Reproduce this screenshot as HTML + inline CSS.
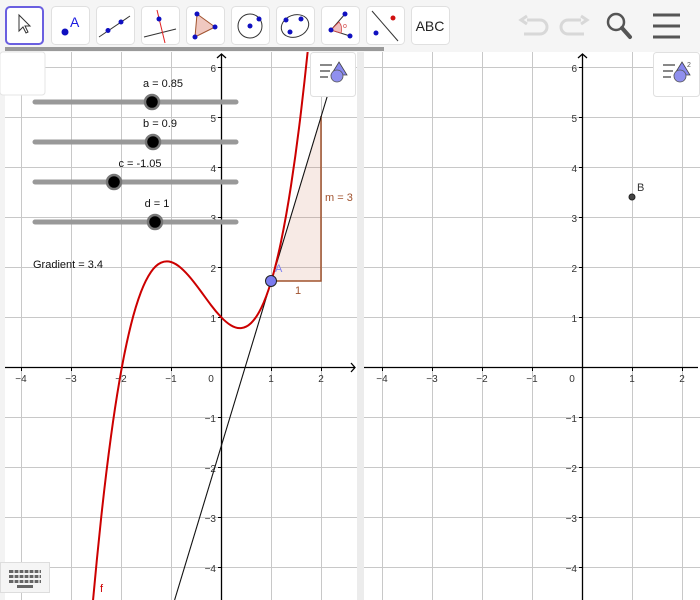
<!DOCTYPE html>
<html><head><meta charset="utf-8"><style>
html,body{margin:0;padding:0;width:700px;height:600px;overflow:hidden;background:#fff;font-family:"Liberation Sans",sans-serif}
svg{position:absolute;left:0;top:0}
</style></head><body>
<svg width="700" height="600" viewBox="0 0 700 600" font-family="Liberation Sans, sans-serif">
<rect x="0" y="0" width="700" height="600" fill="#fff"/>
<rect x="0" y="52" width="5" height="548" fill="#f3f3f3"/>
<rect x="357" y="52" width="7" height="548" fill="#ececec"/>
<g stroke="#c8c8c8" stroke-width="1">
<path d="M21.5 52V600M71.5 52V600M121.5 52V600M171.5 52V600M271.5 52V600M321.5 52V600"/>
<path d="M5 67.5H357M5 117.5H357M5 167.5H357M5 217.5H357M5 267.5H357M5 317.5H357M5 417.5H357M5 467.5H357M5 517.5H357M5 567.5H357"/>
</g>
<g stroke="#c8c8c8" stroke-width="1">
<path d="M382.5 52V600M432.5 52V600M482.5 52V600M532.5 52V600M632.5 52V600M682.5 52V600"/>
<path d="M364 67.5H700M364 117.5H700M364 167.5H700M364 217.5H700M364 267.5H700M364 317.5H700M364 417.5H700M364 467.5H700M364 517.5H700M364 567.5H700"/>
</g>
<g stroke="#000" stroke-width="1.3" fill="none">
<path d="M221.5 54V600M5 367.5H355"/>
<path d="M217 58L221.5 54L226 58M351 363L355 367.5L351 372"/>
<path d="M582.5 54V600M364 367.5H698"/>
<path d="M578 58L582.5 54L587 58"/>
</g>
<g stroke="#000" stroke-width="1">
<path d="M21.5 367V371M71.5 367V371M121.5 367V371M171.5 367V371M271.5 367V371M321.5 367V371"/>
<path d="M218 67.5H221M218 117.5H221M218 167.5H221M218 217.5H221M218 267.5H221M218 317.5H221M218 417.5H221M218 467.5H221M218 517.5H221M218 567.5H221"/>
<path d="M382.5 367V371M432.5 367V371M482.5 367V371M532.5 367V371M632.5 367V371M682.5 367V371"/>
<path d="M579 67.5H582M579 117.5H582M579 167.5H582M579 217.5H582M579 267.5H582M579 317.5H582M579 417.5H582M579 467.5H582M579 517.5H582M579 567.5H582"/>
</g>
<g font-size="10" fill="#333" text-anchor="middle">
<text x="21" y="382">−4</text><text x="71" y="382">−3</text><text x="121" y="382">−2</text><text x="171" y="382">−1</text><text x="211" y="382">0</text><text x="271" y="382">1</text><text x="321" y="382">2</text>
<text x="382" y="382">−4</text><text x="432" y="382">−3</text><text x="482" y="382">−2</text><text x="532" y="382">−1</text><text x="572" y="382">0</text><text x="632" y="382">1</text><text x="682" y="382">2</text>
</g>
<g font-size="10" fill="#333" text-anchor="end">
<text x="216" y="72">6</text><text x="216" y="122">5</text><text x="216" y="172">4</text><text x="216" y="222">3</text><text x="216" y="272">2</text><text x="216" y="322">1</text>
<text x="216" y="422">−1</text><text x="216" y="472">−2</text><text x="216" y="522">−3</text><text x="216" y="572">−4</text>
<text x="577" y="72">6</text><text x="577" y="122">5</text><text x="577" y="172">4</text><text x="577" y="222">3</text><text x="577" y="272">2</text><text x="577" y="322">1</text>
<text x="577" y="422">−1</text><text x="577" y="472">−2</text><text x="577" y="522">−3</text><text x="577" y="572">−4</text>
</g>
<polygon points="271,281 321,281 321,116" fill="#c87050" fill-opacity="0.15"/>
<path d="M271 281H321V116" stroke="#a0522d" stroke-width="1.5" fill="none"/>
<text x="298" y="294" font-size="11" fill="#a0522d" text-anchor="middle">1</text>
<text x="325" y="201" font-size="11" fill="#a0522d">m = 3</text>
<clipPath id="cl"><rect x="5" y="52" width="352" height="548"/></clipPath>
<g clip-path="url(#cl)">
<path d="M174.6 600L340.7 52" stroke="#111" stroke-width="1.1" fill="none"/>
<path fill="none" stroke="#cc0000" stroke-width="2" d="M91 623.3 C94.3 584.9 97.7 550.4 101 519.3 C104.3 488.2 107.7 460.6 111 436.2 C114.3 411.8 117.7 390.5 121 372 C124.3 353.5 127.7 337.8 131 324.6 C134.3 311.4 137.7 300.6 141 291.9 C144.3 283.2 147.7 276.7 151 271.9 C154.3 267.1 157.7 264.2 161 262.7 C164.3 261.2 167.7 261 171 262 C174.3 263 177.7 265.1 181 268 C184.3 270.9 187.7 274.5 191 278.5 C194.3 282.5 197.7 287 201 291.5 C204.3 296 207.7 300.7 211 305.1 C214.3 309.5 217.7 313.5 221 317 C224.3 320.5 227.7 323.4 231 325.4 C234.3 327.4 237.7 328.4 241 328.1 C244.3 327.8 247.7 326.3 251 323.1 C254.3 319.9 257.7 315.1 261 308.4 C264.3 301.7 267.7 293 271 282 C274.3 271 277.7 257.7 281 241.8 C284.3 225.9 287.7 207.3 291 185.7 C294.3 164.1 297.7 139.6 301 111.7 C304.3 83.8 307.7 52.8 311 17.9"/>
</g>
<text x="100" y="592" font-size="11" fill="#cc0000">f</text>
<circle cx="271" cy="281" r="5.5" fill="#7b7bef" stroke="#222" stroke-width="1"/>
<text x="275" y="272" font-size="11" fill="#8080f0">A</text>
<circle cx="632" cy="197" r="3" fill="#444" stroke="#222"/>
<text x="637" y="191" font-size="11" fill="#333">B</text>
<g stroke="#999" stroke-width="5" stroke-linecap="round">
<path d="M35 102H236M35 142H236M35 182H236M35 222H236"/>
</g>
<g fill="#000" stroke="#777" stroke-width="2.5">
<circle cx="152" cy="102" r="7"/><circle cx="153" cy="142" r="7"/><circle cx="114" cy="182" r="7"/><circle cx="155" cy="222" r="7"/>
</g>
<g font-size="11" fill="#111" text-anchor="middle">
<text x="163" y="87">a = 0.85</text><text x="160" y="127">b = 0.9</text><text x="140" y="167">c = -1.05</text><text x="157" y="207">d = 1</text>
</g>
<text x="33" y="268" font-size="11" fill="#111">Gradient = 3.4</text>
<rect x="0" y="0" width="700" height="52" fill="#f5f5f5"/>
<rect x="5" y="47" width="379" height="4" fill="#9a9a9a"/>
<g fill="#fff" stroke="#e0e0e0">
<rect x="51.5" y="6.5" width="38" height="38" rx="4"/><rect x="96.5" y="6.5" width="38" height="38" rx="4"/><rect x="141.5" y="6.5" width="38" height="38" rx="4"/><rect x="186.5" y="6.5" width="38" height="38" rx="4"/><rect x="231.5" y="6.5" width="38" height="38" rx="4"/><rect x="276.5" y="6.5" width="38" height="38" rx="4"/><rect x="321.5" y="6.5" width="38" height="38" rx="4"/><rect x="366.5" y="6.5" width="38" height="38" rx="4"/><rect x="411.5" y="6.5" width="38" height="38" rx="4"/>
</g>
<rect x="6" y="7" width="37" height="37" rx="4" fill="#fff" stroke="#6a5fe0" stroke-width="2"/>
<path d="M19 15V31L23 27L26 33L28 32L25 26L30 26Z" fill="#fff" stroke="#333" stroke-width="1"/>
<circle cx="65" cy="32" r="3.5" fill="#1010c0"/><text x="70" y="27" font-size="14" fill="#1a1ae0">A</text>
<path d="M99 37L130 16" stroke="#333"/><circle cx="108" cy="30.5" r="2.5" fill="#1010c0"/><circle cx="121" cy="22" r="2.5" fill="#1010c0"/>
<path d="M144 37L176 29" stroke="#333"/><path d="M157 10L165 43" stroke="#e02020"/><circle cx="159" cy="19" r="2.5" fill="#1010c0"/>
<polygon points="197,14 215,27 195,37" fill="#f0c8c0" stroke="#a0522d"/><circle cx="197" cy="14" r="2.5" fill="#1010c0"/><circle cx="215" cy="27" r="2.5" fill="#1010c0"/><circle cx="195" cy="37" r="2.5" fill="#1010c0"/>
<circle cx="250" cy="26" r="12" fill="none" stroke="#333"/><circle cx="250" cy="26" r="2.5" fill="#1010c0"/><circle cx="259" cy="19" r="2.5" fill="#1010c0"/>
<ellipse cx="295" cy="26" rx="14" ry="11" transform="rotate(-20 295 26)" fill="none" stroke="#333"/><circle cx="286" cy="20" r="2.5" fill="#1010c0"/><circle cx="301" cy="19" r="2.5" fill="#1010c0"/><circle cx="290" cy="32" r="2.5" fill="#1010c0"/>
<path d="M345 14L331 30L350 36" fill="none" stroke="#333"/><path d="M331 30L339 22A11 11 0 0 1 341 33Z" fill="#f0c0c0" stroke="#d04040" stroke-width="0.8"/><circle cx="345" cy="14" r="2.5" fill="#1010c0"/><circle cx="331" cy="30" r="2.5" fill="#1010c0"/><circle cx="350" cy="36" r="2.5" fill="#1010c0"/><text x="343" y="28" font-size="7" fill="#d04040">o</text>
<path d="M372 11L398 41" stroke="#333"/><circle cx="393" cy="18" r="2.5" fill="#d01010"/><circle cx="376" cy="33" r="2.5" fill="#1010c0"/>
<text x="430" y="31" font-size="14" fill="#222" text-anchor="middle">ABC</text>
<path d="M527 20H540A7 7 0 0 1 540 34H524M527 16L521 20L527 24" fill="none" stroke="#d8d8d8" stroke-width="3"/>
<path d="M581 20H568A7 7 0 0 0 568 34H584M581 16L587 20L581 24" fill="none" stroke="#d8d8d8" stroke-width="3"/>
<circle cx="616" cy="22" r="8" fill="none" stroke="#555" stroke-width="2.5"/><path d="M622 28L630 37" stroke="#555" stroke-width="4" stroke-linecap="round"/>
<path d="M653 15H680M653 26H680M653 37H680" stroke="#555" stroke-width="3"/>
<rect x="0" y="52" width="45" height="43" rx="3" fill="#fff" stroke="#e4e4e4"/>
<rect x="310.5" y="52.5" width="45" height="44" rx="3" fill="#fff" stroke="#e0e0e0"/>
<g transform="translate(318,62)">
<path d="M2 3H14M2 9H12M2 15H10" stroke="#888" stroke-width="2"/><polygon points="21,0 29,13 13,13" fill="#8888ee" stroke="#444" stroke-width="0.8"/><circle cx="19" cy="14" r="6" fill="#9090ee" stroke="#555" stroke-width="0.8"/>
</g>
<rect x="653.5" y="52.5" width="46" height="44" rx="3" fill="#fff" stroke="#e0e0e0"/>
<g transform="translate(661,62)">
<path d="M2 3H14M2 9H12M2 15H10" stroke="#888" stroke-width="2"/><polygon points="21,0 29,13 13,13" fill="#8888ee" stroke="#444" stroke-width="0.8"/><circle cx="19" cy="14" r="6" fill="#9090ee" stroke="#555" stroke-width="0.8"/><text x="26" y="5" font-size="7" fill="#555">2</text>
</g>
<rect x="0.5" y="562.5" width="49" height="30" fill="#f5f5f5" stroke="#ddd"/>
<g fill="#666">
<rect x="9" y="570" width="32" height="3"/><rect x="9" y="575" width="32" height="3"/><rect x="9" y="580" width="32" height="3"/><rect x="17" y="585" width="16" height="3"/>
</g>
<g stroke="#f5f5f5" stroke-width="1.2"><path d="M14 569V584M19 569V584M24 569V584M29 569V584M34 569V584M39 569V584"/></g>
</svg>
</body></html>
